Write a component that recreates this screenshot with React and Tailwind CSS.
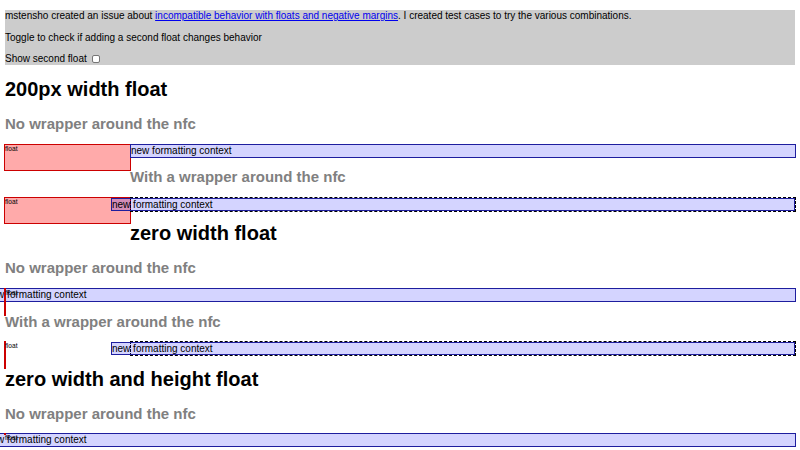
import React from "react";

const nfc =
  "border border-[#1e1e9e] bg-[rgba(0,0,255,0.17)] text-[10px] leading-[11.5px] whitespace-nowrap";
const h1 = "text-[20px] font-bold leading-[23px]";
const h2 = "text-[15px] font-bold leading-[17px] text-[#808080]";

function WideFloat() {
  return (
    <div className="ml-[-1px] w-[127px] h-[27px] shrink-0 border border-[#cc0000] bg-[#ffaaaa] text-[6.6px] leading-[7px]">
      float
    </div>
  );
}

function ZeroFloat({ tall }) {
  return (
    <div
      className={
        tall
          ? "absolute left-[-1px] top-0 w-0 h-[28px] border border-[#cc0000] text-[6.6px] leading-[7px] whitespace-nowrap"
          : "absolute left-[-1px] top-0 w-0 h-0 border border-[#cc0000] text-[6.6px] leading-[7px] whitespace-nowrap"
      }
    >
      float
    </div>
  );
}

export default function App() {
  return (
    <div className="h-[450px] w-[800px] overflow-hidden bg-white text-black font-['Liberation_Sans',Arial,sans-serif]">
      <div className="px-[5px] pt-[10px] flex flex-col">
        <div className="bg-[#cccccc] flex flex-col gap-[10px] text-[10px] leading-[11.5px]">
          <p>
            mstensho created an issue about{" "}
            <a className="text-[#0000ee] underline">
              incompatible behavior with floats and negative margins
            </a>
            . I created test cases to try the various combinations.
          </p>
          <p>Toggle to check if adding a second float changes behavior</p>
          <p className="flex items-center">
            Show second float
            <span className="ml-[5px] inline-block w-[8px] h-[8px] rounded-[2px] border border-[#767676] bg-white" />
          </p>
        </div>

        <h1 className={h1 + " mt-[13px]"}>200px width float</h1>
        <h2 className={h2 + " mt-[14px]"}>No wrapper around the nfc</h2>

        <div className="mt-[12.5px] flex items-start">
          <WideFloat />
          <div className="ml-[-1px] mr-[-1px] flex-1 min-w-0 flex flex-col">
            <div className={nfc}>new formatting context</div>
            <h2 className={h2 + " mt-[10.5px]"}>With a wrapper around the nfc</h2>
          </div>
        </div>

        <div className="mt-[11.5px] flex items-start">
          <WideFloat />
          <div className="ml-[-1px] mr-[-1px] flex-1 min-w-0 flex flex-col">
            <div className="border border-dashed border-black">
              <div className={nfc + " ml-[-20px]"}>new formatting context</div>
            </div>
            <h1 className={h1 + " mt-[10px]"}>zero width float</h1>
          </div>
        </div>

        <h2 className={h2 + " mt-[13.5px]"}>No wrapper around the nfc</h2>
        <div className="relative mt-[12.5px]">
          <div className={nfc + " ml-[-20px] mr-[-1px]"}>new formatting context</div>
          <ZeroFloat tall />
        </div>

        <h2 className={h2 + " mt-[11.5px]"}>With a wrapper around the nfc</h2>
        <div className="relative mt-[10.5px]">
          <div className="ml-[125px] mr-[-1px] border border-dashed border-black">
            <div className={nfc + " ml-[-20px]"}>new formatting context</div>
          </div>
          <ZeroFloat tall />
        </div>

        <h1 className={h1 + " mt-[12px]"}>zero width and height float</h1>
        <h2 className={h2 + " mt-[13.5px]"}>No wrapper around the nfc</h2>
        <div className="relative mt-[11.5px]">
          <div className={nfc + " ml-[-20px] mr-[-1px]"}>new formatting context</div>
          <ZeroFloat />
        </div>
      </div>
    </div>
  );
}
